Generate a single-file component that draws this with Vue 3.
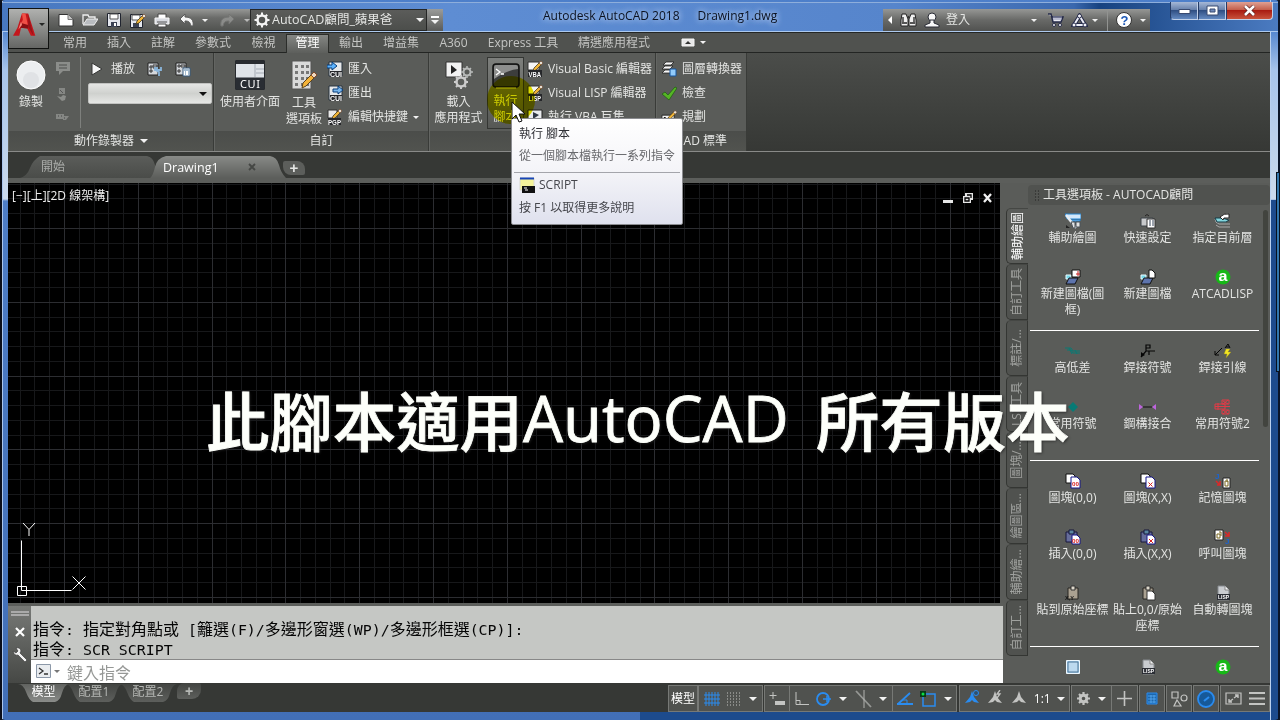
<template>
  <div class="window">
    <!-- title bar -->
    <header class="titlebar">
      <div class="qat">
        <Icon v-for="n in ['new', 'open', 'save', 'saveas', 'print']" :key="n" :name="n" class="qat-btn" />
        <Icon name="undo" class="qat-undo" />
        <i class="caret small"></i>
        <Icon name="redo" class="qat-redo" />
        <i class="caret small dim"></i>
        <div class="workspace">
          <Icon name="gear" />
          <span>AutoCAD顧問_蘋果爸</span>
          <i class="caret"></i>
        </div>
        <div class="qat-more"><b></b><i class="caret"></i></div>
      </div>
      <div class="caption"><span>Autodesk AutoCAD 2018</span><span>Drawing1.dwg</span></div>
      <div class="infobar">
        <i class="caret-left"></i>
        <Icon name="binoculars" />
        <Icon name="user" />
        <span class="login">登入</span>
        <i class="caret small"></i>
        <Icon name="cart" class="cart" />
        <Icon name="triangle" class="tri" />
        <i class="caret small"></i>
        <div class="help"><Icon name="help" /></div>
        <i class="caret small"></i>
      </div>
      <div class="controls">
        <div class="ctl"><Icon name="min" /></div>
        <div class="ctl"><Icon name="max" /></div>
        <div class="ctl close"><Icon name="close" /></div>
      </div>
    </header>

    <div class="body">
      <nav class="ribbon-tabs">
        <div v-for="t in ribbonTabs" :key="t.label" class="rtab" :class="{ active: t.active }" :style="{ width: t.w + 'px' }">{{ t.label }}</div>
        <Icon name="ribbonToggle" class="toggle" />
        <i class="caret small"></i>
      </nav>

      <section class="ribbon">
        <div class="panel recorder">
          <div class="panel-body">
            <div class="big rec"><Icon name="record" /><span>錄製</span></div>
            <div class="mini-col"><Icon name="comment" /><Icon name="clickmsg" /><Icon name="pause" /></div>
            <div class="play-col">
              <div class="play-row"><Icon name="play" /><span>播放</span><Icon name="pref" /><Icon name="manage" /></div>
              <div class="combo"><i class="caret"></i></div>
            </div>
          </div>
          <div class="panel-title">動作錄製器 <i class="caret"></i></div>
        </div>
        <div class="panel custom">
          <div class="panel-body">
            <div class="big cui"><Icon name="cui" /><span>使用者介面</span></div>
            <div class="big palette-btn"><Icon name="palette" /><span>工具<br />選項板</span></div>
            <div class="rows">
              <div class="row"><Icon name="import" /><span>匯入</span></div>
              <div class="row"><Icon name="export" /><span>匯出</span></div>
              <div class="row"><Icon name="pgp" /><span>編輯快捷鍵</span><i class="caret small"></i></div>
            </div>
          </div>
          <div class="panel-title">自訂</div>
        </div>
        <div class="panel apps">
          <div class="panel-body">
            <div class="big load"><Icon name="load" /><span>載入<br />應用程式</span></div>
            <div class="big run"><Icon name="script" /><span>執行<br />腳本</span></div>
            <div class="rows">
              <div class="row"><Icon name="vba" /><span class="vb">Visual Basic 編輯器</span></div>
              <div class="row"><Icon name="lisp" /><span class="vb">Visual LISP 編輯器</span></div>
              <div class="row"><Icon name="runvba" /><span>執行 VBA 巨集</span></div>
            </div>
          </div>
          <div class="panel-title">應用程式 <i class="caret"></i></div>
        </div>
        <div class="panel standards">
          <div class="panel-body">
            <div class="rows">
              <div class="row"><Icon name="layers" /><span>圖層轉換器</span></div>
              <div class="row"><Icon name="check" /><span>檢查</span></div>
              <div class="row"><Icon name="configure" /><span>規劃</span></div>
            </div>
          </div>
          <div class="panel-title">CAD 標準</div>
        </div>
      </section>

      <nav class="doc-tabs">
        <div class="dtab start">開始</div>
        <div class="dtab current"><span>Drawing1</span><Icon name="tabClose" /></div>
        <div class="dtab add">+</div>
      </nav>

      <main class="work">
        <div class="left">
          <div class="canvas">
            <svg class="grid" width="992" height="421">
              <path v-for="(l, i) in gridLines" :key="i" :d="l.d" :stroke="l.major ? '#2c2d31' : '#17181a'" />
            </svg>
            <div class="canvas-head">
              <span>[−][上][2D 線架構]</span>
              <Icon name="vpControls" />
            </div>
            <Icon name="ucs" class="ucs" />
          </div>
          <div class="command">
            <div class="cmd-handle"><Icon name="grip" /><Icon name="cmdClose" /><Icon name="wrench" /></div>
            <div class="cmd-main">
              <div class="history">
                <p v-for="line in history" :key="line"><span v-for="(s, i) in split(line)" :key="i" :class="{ latin: !s.cjk }">{{ s.text }}</span></p>
              </div>
              <div class="prompt"><Icon name="prompt" /><i class="caret small"></i><span>鍵入指令</span></div>
            </div>
          </div>
        </div>

        <aside class="palette">
          <div class="pal-tabs">
            <div v-for="(t, i) in paletteTabs" :key="i" class="ptab" :class="{ active: i === 0 }"><span>{{ t }}</span></div>
          </div>
          <div class="pal-main">
            <div class="pal-title"><Icon name="dots" /><span>工具選項板 - AUTOCAD顧問</span></div>
            <div class="pal-content">
              <div class="pal-groups">
                <div v-for="(g, i) in groups" :key="i" class="group">
                  <div v-for="t in g" :key="t[1]" class="tool"><Icon :name="t[0]" /><span>{{ t[1] }}</span></div>
                </div>
              </div>
              <div class="scroll"></div>
            </div>
          </div>
        </aside>
      </main>

      <footer class="footer">
        <div class="layouts">
          <div class="ltab active">模型</div>
          <div class="ltab">配置1</div>
          <div class="ltab">配置2</div>
          <div class="ltab plus">+</div>
        </div>
        <div class="status">
          <div v-for="(s, i) in statusGroups" :key="i" class="sgroup" :style="{ width: s.w + 'px', marginRight: s.gap + 'px' }">
            <template v-for="(it, j) in s.items" :key="j">
              <i v-if="it === 'v'" class="caret"></i>
              <Icon v-else-if="it in icons" :name="it" />
              <span v-else>{{ it }}</span>
            </template>
          </div>
        </div>
      </footer>
    </div>

    <!-- floating things -->
    <div class="appmenu"><Icon name="logo" /><i class="caret dark"></i></div>
    <div class="halo"></div>
    <div class="tooltip">
      <p class="tip-title">執行 腳本</p>
      <p class="tip-desc">從一個腳本檔執行一系列指令</p>
      <hr />
      <p class="tip-cmd"><Icon name="scriptTip" />SCRIPT</p>
      <p class="tip-help">按 F1 以取得更多說明</p>
    </div>
    <Icon name="cursor" class="cursor" />
    <div class="subtitle"><span>此腳本適用</span><span class="sub-latin">AutoCAD</span><span>所有版本</span></div>
    <div class="edge"></div>
  </div>
</template>

<script setup>
import { h } from 'vue';

// shape helpers: path and label
const p = (d, fill = 'none', stroke = 'none', w = 1) => ['path', { d, fill, stroke, 'stroke-width': w }];
const t = (text, x, y, size, fill, len) => ['text', {
  x, y, fill, 'font-size': size, 'font-weight': 700, 'font-family': '"Liberation Sans", sans-serif',
  textLength: len, lengthAdjust: 'spacingAndGlyphs'
}, text];
const c = (cx, cy, r, fill = 'none', stroke = 'none', w = 1) => ['circle', { cx, cy, r, fill, stroke, 'stroke-width': w }];

const L = '#e8e9ea';
const B = '#2a8cf0';
const G = '#c3c4c2';
const D = '#26272a';

// repeated pieces
const sheet = p('M1 1h7l3 3v9H1z', '#fff', '#222');
const pencil = (x, y) => [
  p(`M${x} ${y + 9}l1-3 6-6 2 2-6 6z`, '#f0b437', '#443a20', 0.8),
  p(`M${x + 6} ${y + 1}l2-2 2 2-2 2z`, '#e8e2d8', '#6a3d20', 0.6)
];
const cuiBox = [p('M2 1h13v14H2z', '#e6e8ea', '#26323f'), p('M3 10h12v6H3z', D), t('CUI', 3, 16, 7, '#fff', 12)];
const lispIcon = [p('M3 1h7l4 4v10H3z', '#c9ccd0', '#85898e'), p('M10 1v4h4', '#f5f5f5', '#888'), p('M2 9h13v6H2z', '#2b2e35'), t('LISP', 3, 14, 5.5, '#fff', 11)];
const green = [c(8, 8, 7.5, '#16b816'), t('a', 3.6, 12.4, 14, '#fff', 9)];
const folder = [p('M1 6h5v4H1z', '#76d6e8', '#e8fbff'), p('M1 15l3-6h9l-3 6z', '#5d74ad', '#111')];
const twoSheets = [p('M1 1h7l2 2v7H1z', '#fff', '#111'), p('M6 4h6l3 3v8H6z', '#fff', '#15158a')];
const clip = [p('M1 3h11v10H1z', '#666d9b', '#16163c'), p('M4 1h5v4H4z', '#5a86a0', '#16163c'), p('M7 6h5l3 3v6H7z', '#fff', '#15158a')];
const clipTan = [p('M3 3h10v11H3z', '#aaa191', '#292722'), p('M6 1h4v4H6z', '#ded9cc', '#333')];
const blockJ = [p('M8 5h7v10H8z', '#fff', '#222'), p('M10 8h3v5h-3zM12 6v3', 'none', '#76651d')];
const redX = p('M8.5 9.5l4 4M12.5 9.5l-4 4', 'none', '#d92020');
const star = 'M8 1l2 6 5 6-5-1-2-2-2 2-5 1 5-6z';

const icons = {
  logo: [28, 28, p('M10 1h7l8 25h-5l-4-8-7-1-2 9H0L5 17z', '#c4161c'), p('M10 1h4l3 15-9-1 3-7z', '#ef5047'), p('M10 12l7 2v4l-9-1z', '#8a0e12'), p('M9 10l-3 9 4-5z', '#f48b80'), p('M17 2l6 24-6-10z', '#97151a')],
  new: [16, 14, p('M1 1.500h9l5 5V13H1z', '#fff', '#333'), p('M10 1.500v5h5', '#c8c8c8', '#777')],
  open: [16, 14, p('M1 11V2h5l1 2h6v2', 'none', '#eee', 1.300), p('M1 12l4-6h11l-4 6z', '#b9bcc0', '#eee')],
  save: [14, 14, p('M.5.500h13v13H.5z', '#e4e7ee', '#20242f'), p('M3 1h8v5H3z', '#fff', '#555'), p('M4 9h6v5H4z', '#3b4254'), p('M7 10h2v3H7z', '#fff')],
  saveas: [16, 15, p('M.5 1.500h12v13H.5z', '#e4e7ee', '#20242f'), p('M2 2h8v5H2z', '#fff', '#555'), p('M3 10h6v4H3z', '#3b4254'), ...pencil(6, 2)],
  print: [16, 15, p('M4 1h8v5H4z', '#fff', '#444'), p('M1 5h14v6H1z', '#d8dae0', '#f8f8f8'), p('M3 9h10', 'none', '#555'), p('M4 11h8v3H4z', '#fff', '#444')],
  undo: [15, 14, p('M6 1L1 6l5 5V8c4 0 5 1 6 5h2c1-6-2-9-8-9z', '#f5f5f5', '#5a5a5a')],
  redo: [15, 14, p('M9 1l5 5-5 5V8C5 8 4 9 3 13H1c-1-6 2-9 8-9z', '#8b8c8a', '#747573')],
  gear: [16, 16, c(8, 8, 4.500, 'none', '#f5f5f5', 2.500), p('M8 .5v3M8 12.500v3M.5 8h3M12.500 8h3M2.800 2.800l2 2M11.200 11.200l2 2M13.200 2.800l-2 2M2.800 13.200l2-2', 'none', '#f5f5f5', 2)],
  binoculars: [17, 16, p('M2 2h4l2 5v7H1V8zM15 2h-4L9 7v7h7V8z', '#f0f0f0', '#222'), p('M3 5v5M14 5v5M2 11h5M10 11h5M8 5h1', 'none', '#222', 1.300)],
  user: [16, 16, c(8, 5, 4, '#f8f8f8', '#2b2d36'), p('M6 8h4v3l5 2v2H1v-2l5-2z', '#f8f8f8', '#2b2d36')],
  cart: [17, 16, p('M1 2h3l2 8h8l2-5H5', '#e9eaf3', '#252a48', 1.500), p('M6 5h9M6 7h9', 'none', '#8b8fae'), c(7, 13, 1.500, '#fff', '#252a48'), c(13, 13, 1.500, '#fff', '#252a48')],
  triangle: [17, 15, p('M8.500 3L3 12h11z', 'none', '#252a48', 4), p('M8.500 3L3 12h11z', 'none', '#eceef7', 2), c(8.500, 3, 2, '#f3f4fa', '#252a48'), c(3, 12, 2, '#f3f4fa', '#252a48'), c(14, 12, 2, '#f3f4fa', '#252a48')],
  help: [16, 16, c(8, 8, 7.500, '#fff', '#333'), t('?', 4.500, 13, 13, '#1b57b5')],
  min: [13, 8, p('M1 2.500h11v4H1z', '#fff', '#394a70')],
  max: [13, 11, p('M1 1h11v9H1z', '#fff', '#394a70'), p('M4 4h5v3H4z', '#6f89ba', '#394a70')],
  close: [13, 11, p('M2 1l9 9M11 1L2 10', 'none', '#5c2020', 4), p('M2 1l9 9M11 1L2 10', 'none', '#fff', 2.600)],
  ribbonToggle: [14, 9, p('M1 1h12v7H1z', '#e8e8e8', '#f5f5f5'), p('M4 6l3-3 3 3z', '#333')],
  record: [30, 30, c(15, 15, 14, '#eceef0', '#fff'), c(15, 20, 8, '#e0e2e5')],
  comment: [14, 14, p('M0 0h14v9H7l-4 4V9H0z', '#8b8d8a'), p('M3 3h8M3 6h8', 'none', '#4d4f4c')],
  clickmsg: [14, 14, p('M3 0h6v6H3z', '#858784'), p('M1 8l4 1 2-2 3 1-1 4-3 1z', '#8b8d8a'), p('M4 2l3 3', 'none', '#555')],
  pause: [14, 8, p('M0 0h8v2h5L10 6H7V5H0z', '#858784'), p('M2 2h1M5 2h1M8 4h1', 'none', '#444')],
  play: [12, 14, p('M1 1l10 6-10 6z', '#f7f7f7', '#343534')],
  pref: [15, 15, p('M1 1h10v12H1z', '#d5d8dc', '#222'), p('M3 4h2v2H3zM3 8h2v2H3zM6 3h4v2H6zM6 6h4', 'none', '#333'), p('M10 5v4l2 1v4M8 5v3h6V5', 'none', '#8ab6dc', 1.800)],
  manage: [16, 15, p('M1 1h10v12H1z', '#d5d8dc', '#222'), p('M3 3h2v2H3zM3 8h2v2H3zM6 3h4v2H6z', 'none', '#333'), p('M8 6h7v8H8z', '#fff', '#345b80'), p('M9 8h5M10 10h1M13 10h1M10 12h1M13 12h1', 'none', '#46769f')],
  cui: [30, 30, p('M.5.500h29v29H.5z', '#dfe3e8', '#272a2e'), p('M1 1h28v3H1z', '#282b30'), p('M20 4v13M21 9h8M21 13h8', 'none', '#a5abb5'), p('M1 17.500h28V29H1z', '#292d33'), ['text', { x: 5, y: 28, fill: '#fff', 'font-size': 11, 'font-family': '"Noto Sans", sans-serif', textLength: 20 }, 'CUI']],
  palette: [26, 31, p('M1 1h19v28H1z', '#dadada', '#555'), ...[5, 11, 17, 23].flatMap(y => [4, 10, 15].map(x => p(`M${x} ${y}h3v3h-3z`, '#777'))), p('M11 28l1-5 9-9 3 3-9 9z', '#f4b33a', '#5b431d'), p('M20 15l3-3 3 3-3 3z', '#edd9c2', '#864c28')],
  import: [16, 16, ...cuiBox, p('M0 4h5V1l5 4-5 4V7H0z', '#5bb3ff', '#083d78')],
  export: [16, 16, ...cuiBox, p('M6 4h5V1l5 4-5 4V7H6z', '#76b5ed', '#083d78')],
  pgp: [16, 16, p('M1 1h9v8H1z', '#e9e9e9', '#333'), ...pencil(5, 1), p('M1 9h13v7H1z', D), t('PGP', 1, 15.5, 7, '#fff', 13)],
  load: [28, 29, p('M1 1h16v15H1z', '#f2f2f2', '#333'), p('M6 4v9l6-4z', '#222'), c(22, 11, 3.5, 'none', '#b7b9b8', 2), p('M22 5v3M22 14v3M16 11h3M25 11h3M18 7l2 2M26 7l-2 2M18 15l2-2M26 15l-2-2', 'none', '#b7b9b8', 1.5), c(16, 21, 4.5, 'none', '#ccc', 2.5), p('M16 14v3M16 25v3M9 21h3M20 21h3M11 16l2 2M21 16l-2 2M11 26l2-2M21 26l-2-2', 'none', '#ccc', 2)],
  script: [28, 26, ['rect', { x: 1, y: 1, width: 26, height: 23, rx: 3, fill: '#3c3d3c', stroke: '#111', 'stroke-width': 1.5 }], p('M2 10V4q0-2 2-2h20q2 0 2 2v2Q15 7 2 16z', '#8d8e8d'), p('M4 6l4 3-4 3M9 11h3', 'none', '#fff', 1.3), p('M4 25h20', 'none', '#ccc')],
  vba: [16, 17, p('M1 1h11v8H1z', '#f5f5f5', '#333'), ...pencil(6, 1), p('M1 9h14v7H1z', D), t('VBA', 1.5, 15.7, 7, '#fff', 12.5)],
  lisp: [16, 17, p('M1 1h11v8H1z', '#f5f5f5', '#333'), ...pencil(6, 1), p('M1 9h14v7H1z', D), t('LISP', 1.500, 15.700, 7, '#fff', 12.500)],
  runvba: [16, 16, p('M1 1h14v14H1z', '#e9ebed', '#222'), p('M6 3v7l6-4z', '#303845')],
  layers: [16, 16, p('M5 1h8l-3 3H2zM4 5h8l-3 3H1zM4 9h8l-3 3H1z', '#f8f8f8', '#222', 0.8), p('M9 8h6v7H9z', '#91cafa', '#17559c')],
  check: [16, 15, p('M1 8l3-2 3 3 7-8 2 1-8 12z', '#55b525', '#1c5a12', 0.7)],
  configure: [17, 15, p('M1 5h13v6H1z', '#f4f4f4', '#222'), p('M3 7h2v2H3z', '#111'), ...pencil(7, 1)],
  tabClose: [8, 8, p('M1 1l6 6M7 1L1 7', 'none', '#454744', 1.800)],
  vpControls: [50, 12, p('M0 8h10v3H0zM22 1h8v7h-2v3h-8V4h2z', '#e6e6e6'), p('M22 6h4v3h-4zM24 3h4v3', 'none', '#000', 1.3), p('M41 2l7 8M48 2l-7 8', 'none', '#f0f0f0', 2.3)],
  ucs: [78, 76, p('M9.500 18.500v50h50M5.500 64.500h9v9h-9zM60.500 54.500l13 13M73.500 54.500l-13 13M11 1l6 6.500L23 1M17 7.500V14', 'none', '#fff')],
  grip: [18, 6, p('M0 1h18M0 4h18', 'none', '#aaa', 2)],
  cmdClose: [10, 10, p('M1 1l8 8M9 1L1 9', 'none', '#fff', 2.200)],
  wrench: [16, 16, p('M1 4l3 2 2-2-2-3q4-1 5 3l-1 2 7 7-2 2-7-7q-4 1-5-4z', '#f3f3f3', '#333', 0.6)],
  prompt: [16, 15, p('M.5.5h14v13H.5z', '#e9ecef', '#8c98a8'), p('M3 4l4 3-4 3M8 10h4', 'none', '#333', 1.3)],
  dots: [4, 11, p('M.5 0v11M3.500 0v11', 'none', '#393a38'), p('M0 2.500h4M0 5.500h4M0 8.500h4', 'none', '#555754')],
  scriptTip: [17, 16, p('M1 1h14v12H1z', '#f5f49b', '#d8d8d0'), p('M1 1.500h14', 'none', '#1744b8', 2), p('M3 9h13v7H3z', '#111'), p('M5 11h3M6 13h3', 'none', '#fff')],
  cursor: [15, 22, p('M1 1v17l4-4 3 7 3-1-3-7h6z', '#fff', '#111')],
  // palette tools
  draw: [16, 16, p('M0 1h16v5H2zM5 7h10v1H5z', '#d2e8fb', '#2484d0'), p('M1 2l10 13', 'none', '#e8edf2', 2.500), p('M6 9h4v6H8zM11 9h4v5h-4z', '#e4e4e4', '#4a525b'), p('M1 12v3h4z', '#222')],
  quick: [16, 16, p('M1 5h12v8H1z', '#c7c9cb', '#3c4249'), p('M5 3q2-3 4 0', 'none', '#222'), p('M7 6h8v9H7z', '#fff', '#333'), p('M9 8h2M12 8h2M9 10h2M12 10h2M9 12h2M12 12h2', 'none', '#38465a')],
  curlayer: [17, 16, p('M1 6h14l-3 3H2zM2 9l3 2h11M2 12l3 2h11', 'none', '#aaa'), p('M1 5h7l7 2-3 2H3z', '#82d6de', '#143b45'), p('M6 4q4-4 9-3v4h-5l-1 2z', '#fff', '#222')],
  newframe: [16, 16, ...folder, p('M7 1h8v7H7z', '#fff', '#111'), p('M13 2v5M11 5h4', 'none', '#c42020')],
  newdwg: [16, 16, ...folder, p('M9 1h3l3 3v5H9z', '#fff', '#111')],
  green: [16, 16, ...green],
  level: [16, 16, p('M0 5h6l2 3h7M2 7h4l2 3h7M4 5l3 6M10 7l2 4', 'none', '#087a75', 1)],
  weld: [16, 16, p('M1 14l5-6h9M6 8V2h4v3H6M9 8v4', 'none', '#050505', 1.200), p('M1 14v-5l4 3z', '#050505')],
  weldlead: [17, 16, p('M1 12l7-7M1 12V8M1 12h4M11 5l3-4 2 4M12 4h3', 'none', '#050505'), p('M12 6l-2 5h3l-1 4 5-6h-3l2-3z', '#f3e624', '#92891a', 0.4)],
  diamond: [16, 16, p('M8 3l5 5-5 5-5-5z', '#087a75')],
  steel: [17, 16, p('M4 8h9', 'none', '#111'), p('M0 5l4 3-4 3zM17 5l-4 3 4 3z', '#bd64dd')],
  symbol2: [17, 16, p('M1 5h10v5H1zM1 7.500h15M8 1h7v4H8zM8 11h7v4H8zM9 2l5 3M14 1L9 5M9 11l5 4M14 11l-5 4M4 4v7', 'none', '#e33a47')],
  block0: [16, 16, ...twoSheets, t('00', 7, 13, 6, '#d92020', 7)],
  blockx: [16, 16, ...twoSheets, redX],
  memory: [16, 16, t('J', 0, 6, 8, '#1864d6'), p('M1 8l4 4m0-4v4H2', 'none', '#da2929', 1.5), ...blockJ],
  insert0: [16, 16, ...clip, t('00', 7, 14, 6, '#d92020', 7)],
  insertx: [16, 16, ...clip, p('M9 10l4 4M13 10l-4 4', 'none', '#d92020')],
  call: [17, 16, p('M1 1h8v10H1z', '#fff', '#222'), p('M3 5h3v4H3zM5 3h2v4', 'none', '#76651d'), p('M11 3l4 4m0-4v4h-4', 'none', '#da2929', 1.500), t('J', 11, 15, 8, '#1864d6')],
  pastexy: [16, 16, ...clipTan, t('X,Y', 0, 15, 6, '#111', 9)],
  paste0: [16, 16, ...clipTan, p('M7 6h5l3 3v6H7z', '#fff', '#333')],
  lispfile: [16, 16, ...lispIcon],
  square: [16, 16, p('M1.500 1.500h13v13h-13z', '#a8cce7', '#eef8ff'), p('M3 3h10v10H3z', '#bcd9ef', '#4d7798')],
  // status bar
  grid: [16, 16, p('M2 1v14M5 1v14M8 1v14M11 1v14M14 1v14M0 4h16M0 8h16M0 12h16', 'none', B)],
  snap: [14, 14, ['path', { d: 'M0 1h14M0 4h14M0 7h14M0 10h14M0 13h14', stroke: G, 'stroke-dasharray': '1 2', fill: 'none' }]],
  dyn: [16, 16, p('M4 1v7M.5 4.500h7', 'none', G), p('M6 10h10v4H6z', G)],
  ortho: [14, 14, p('M1 0v12.500h13M1 8.500h4v4', 'none', G)],
  polar: [16, 16, c(7, 8, 6, 'none', B, 1.800), p('M7 8h8M11 5v6', 'none', B, 1.500)],
  iso: [17, 18, p('M1 1l15 16', 'none', '#969895', 1.800), p('M9 0v18', 'none', '#b2b3b1')],
  otrack: [17, 15, p('M0 13h16M1 13L13 2', 'none', B, 1.800), p('M5 9h5v4', 'none', B)],
  osnap: [17, 16, p('M3 3h12v12H3z', 'none', B, 1.500), p('M0 0h6v6H0z', '#063b16'), c(3, 3, 1.500, '#0fe044')],
  annoA: [17, 17, p(star, B), c(12, 3, 2.500, '#31506c', B)],
  annoB: [17, 17, p(star, G), p('M13 0l-3 4h3l-3 4', 'none', G, 1.3)],
  annoC: [17, 17, p(star, G)],
  cog: [13, 13, c(6.500, 6.500, 3.300, 'none', G, 3), p('M6.500 0v3M6.500 10v3M0 6.500h3M10 6.500h3M2 2l2 2M9 9l2 2M11 2L9 4M2 11l2-2', 'none', G, 2.200)],
  plus: [15, 15, p('M7.500 0v15M0 7.500h15', 'none', G, 1.600)],
  calc: [12, 13, p('M1 1h10v11H1z', '#1d67ab', B), p('M2 4h8M2 7h8M2 10h8M5 3v8M8 3v8', 'none', '#62b5ff', 0.7)],
  shapes: [17, 16, p('M1 1h6v6H1zM6 9l4 6H3z', 'none', G, 1.200), c(13, 7, 3, 'none', G, 1.200)],
  perf: [18, 18, c(9, 9, 8, '#165999', B, 1.800), p('M7 11l5-4', 'none', B, 2)],
  full: [17, 13, p('M1 1h15v11H1z', 'none', G, 1.200), p('M9 6l4-3m-3 0h3v3M8 7l-4 3m0-3v3h3', 'none', G, 1.400)],
  menu: [16, 13, p('M0 1h16M0 6.500h16M0 12h16', 'none', G, 2)]
};

const Icon = (props) => {
  const [w, hgt, ...shapes] = icons[props.name];
  return h('svg', { width: w, height: hgt, viewBox: `0 0 ${w} ${hgt}`, class: 'icon' }, shapes.map(s => h(...s)));
};
Icon.props = ['name'];

const ribbonTabs = [
  { label: '常用', w: 44 },
  { label: '插入', w: 44 },
  { label: '註解', w: 44 },
  { label: '參數式', w: 56 },
  { label: '檢視', w: 45 },
  { label: '管理', w: 43, active: true },
  { label: '輸出', w: 44 },
  { label: '增益集', w: 56 },
  { label: 'A360', w: 49 },
  { label: 'Express 工具', w: 90 },
  { label: '精選應用程式', w: 92 }
];

const paletteTabs = ['輔助繪圖', '自訂工具', '標註/...', 'LSP工具', '圖塊/...', '繪圖區...', '輔助繪...', '自訂工...'];

const groups = [
  [
    ['draw', '輔助繪圖'], ['quick', '快速設定'], ['curlayer', '指定目前層'],
    ['newframe', '新建圖檔(圖框)'], ['newdwg', '新建圖檔'], ['green', 'ATCADLISP']
  ],
  [
    ['level', '高低差'], ['weld', '銲接符號'], ['weldlead', '銲接引線'],
    ['diamond', '常用符號'], ['steel', '鋼構接合'], ['symbol2', '常用符號2']
  ],
  [
    ['block0', '圖塊(0,0)'], ['blockx', '圖塊(X,X)'], ['memory', '記憶圖塊'],
    ['insert0', '插入(0,0)'], ['insertx', '插入(X,X)'], ['call', '呼叫圖塊'],
    ['pastexy', '貼到原始座標'], ['paste0', '貼上0,0/原始座標'], ['lispfile', '自動轉圖塊']
  ],
  [['square', ''], ['lispfile', ' '], ['green', '  ']]
];

const statusGroups = [
  { w: 30, gap: 0, items: ['模型'] },
  { w: 65, gap: 1, items: ['grid', 'snap', 'v'] },
  { w: 26, gap: -1, items: ['dyn'] },
  { w: 104, gap: -1, items: ['ortho', 'polar', 'v', 'iso', 'v'] },
  { w: 65, gap: 2, items: ['otrack', 'osnap', 'v'] },
  { w: 111, gap: 1, items: ['annoA', 'annoB', 'annoC', '1:1', 'v'] },
  { w: 41, gap: -1, items: ['cog', 'v'] },
  { w: 27, gap: 1, items: ['plus'] },
  { w: 26, gap: 1, items: ['calc'] },
  { w: 26, gap: 1, items: ['shapes'] },
  { w: 26, gap: 1, items: ['perf'] },
  { w: 50, gap: 0, items: ['full', 'menu'] }
];

const history = [
  '指令: 指定對角點或 [籬選(F)/多邊形窗選(WP)/多邊形框選(CP)]:',
  '指令: SCR SCRIPT'
];

// ideographs are set wider than the latin glyphs
const split = (line) => (line.match(/[\u4e00-\u9fff]+|[^\u4e00-\u9fff]+/g) || [])
  .map(text => ({ text, cjk: text.charCodeAt(0) > 0x4dff }));

// drawing grid, every fifth line is a major one
const gridLines = [];
const step = 73.8 / 5;
for (let i = -3; i < 65; i++) {
  const x = Math.round(56 + i * step) + 0.5;
  gridLines.push({ d: `M${x} 0V421`, major: i % 5 === 0 });
}
for (let i = -3; i < 26; i++) {
  const y = Math.round(45 + i * step) + 0.5;
  gridLines.push({ d: `M0 ${y}H992`, major: i % 5 === 0 });
}
gridLines.sort((a, b) => a.major - b.major);
</script>

<style>
body {
  background: #10151f;
  overflow: hidden;
}
</style>

<style scoped>
.window {
  position: relative;
  box-sizing: border-box;
  width: 1280px;
  height: 720px;
  padding: 2px 9px 9px 8px;
  overflow: hidden;
  border-radius: 5px;
  background: linear-gradient(90deg, #0a0d18 2px, #aac5ec 2px, #aac5ec 3px, transparent 3px, transparent 1278px, #0a1428 1278px),
    linear-gradient(90deg, transparent 8px, transparent 1270px, #b9d0ef 1270px, #b9d0ef 1271px, transparent 1271px),
    linear-gradient(90deg, transparent 640px, #1d4b8d 640px) 0 200px / 100% 520px no-repeat,
    linear-gradient(#4d7fca 0, #5788d0 32px, #a7c4eb 70px, #cbdaed 199px, #4e7dc6 201px, #426fb7 100%);
  color: #e4e5e3;
  font: 12px/16px "Open Sans", "Noto Sans CJK TC", sans-serif;
}

.icon {
  display: block;
  flex: none;
}

p {
  margin: 0;
}

.caret {
  flex: none;
  border: 4px solid transparent;
  border-top: 4px solid #f2f2f2;
  border-bottom: 0;
}

.caret.small {
  border-width: 3px 3px 0;
}

.caret.dim {
  opacity: 0.6;
}

.titlebar {
  display: flex;
  align-items: flex-start;
  height: 30px;
  margin: 0 -7px 0 -6px;
  padding-left: 47px;
  background: linear-gradient(90deg, #4878c0, #5e8dd3 35%, #5685cc 70%, #3a68ae 84%, #174381 86%, #4b7bc1 100%);
  border-top: 1px solid #8eaedb;
  box-sizing: border-box;
  border-bottom: 1px solid #acc9ee;
}

.qat {
  display: flex;
  align-items: center;
  box-sizing: border-box;
  width: 394px;
  height: 22px;
  margin-top: 6px;
  padding-left: 9px;
  background: linear-gradient(#979896, #6a6b69 40%, #50524f);
}

.qat-btn {
  width: 16px;
  margin-right: 8px;
}

.qat-undo {
  margin: 0 8px 0 1px;
}

.qat-redo {
  margin: 0 9px 0 12px;
}

.workspace {
  display: flex;
  align-items: center;
  box-sizing: border-box;
  width: 181px;
  height: 22px;
  margin-left: auto;
  padding: 0 2px 0 3px;
  border: 1px solid #252625;
  background: linear-gradient(#5b5c5a, #4c4e4b);
  font-size: 12.5px;
}

.workspace span {
  margin-left: 2px;
  white-space: nowrap;
}

.workspace .caret {
  margin-left: auto;
}

.qat-more {
  display: flex;
  flex-direction: column;
  align-items: center;
  justify-content: center;
  gap: 2px;
  width: 16px;
  height: 22px;
  background: linear-gradient(#9b9c9a, #595a58);
}

.qat-more b {
  width: 8px;
  height: 2px;
  background: #fff;
}

.caption {
  display: flex;
  gap: 18px;
  margin: 5px 0 0 100px;
  width: 340px;
  color: #0b1220;
  font-size: 12px;
  text-shadow: 0 0 6px #b9cff0, 0 0 6px #b9cff0;
  white-space: nowrap;
}

.infobar {
  display: flex;
  align-items: center;
  box-sizing: border-box;
  width: 267px;
  height: 22px;
  margin-top: 6px;
  padding-left: 5px;
  background: linear-gradient(#969795, #686967 50%, #515250);
}

.caret-left {
  margin-right: 8px;
  border: 4px solid transparent;
  border-right-color: #fff;
  border-left: 0;
}

.infobar .icon + .icon {
  margin-left: 7px;
}

.login {
  width: 85px;
  margin-left: 6px;
}

.infobar .cart {
  margin-left: 10px;
}

.infobar .tri {
  margin-left: 7px;
  margin-right: 4px;
}

.help {
  display: flex;
  align-items: center;
  height: 22px;
  margin: 0 8px 0 9px;
  padding-left: 8px;
  border-left: 1px solid #929391;
}

.controls {
  display: flex;
  margin: -1px 0 0 20px;
}

.ctl {
  display: flex;
  align-items: center;
  justify-content: center;
  box-sizing: border-box;
  width: 28px;
  height: 18px;
  border: 1px solid #c1d0e8;
  border-top: 0;
  border-left-color: #243b66;
  background: linear-gradient(#a6b8d6, #6781ac 45%, #304f83 50%, #6389c0);
}

.ctl:first-child {
  border-radius: 0 0 0 4px;
}

.ctl.close {
  width: 47px;
  border-radius: 0 0 4px 0;
  background: linear-gradient(#dfa193, #c3604d 45%, #a91c12 50%, #c8533c);
}

.body {
  display: flex;
  flex-direction: column;
  height: 680px;
  background: #363835;
  width: 1262px;
}

.ribbon-tabs {
  display: flex;
  align-items: center;
  box-sizing: border-box;
  height: 21px;
  padding-left: 45px;
  border-top: 1px solid #242624;
  border-bottom: 1px solid #232523;
  background: #50524f;
  color: #c4c5c3;
}

.rtab {
  height: 20px;
  line-height: 20px;
  text-align: center;
  white-space: nowrap;
}

.rtab.active {
  position: relative;
  top: 1px;
  box-sizing: border-box;
  height: 19px;
  line-height: 16px;
  border: 1px solid #2b2d2a;
  border-bottom: 0;
  background: linear-gradient(#858784, #5d5f5c);
  color: #fff;
}

.toggle {
  margin: 0 5px 0 21px;
}

.ribbon {
  display: flex;
  box-sizing: border-box;
  height: 99px;
  border-bottom: 1px solid #898a88;
  background: linear-gradient(#4b4d4a, #363835);
}

.panel {
  display: flex;
  flex-direction: column;
  box-sizing: border-box;
  border-right: 1px solid #393b38;
  border-left: 1px solid #636562;
  background: #5a5c59;
}

.recorder {
  width: 206px;
}

.custom {
  width: 215px;
}

.apps {
  width: 227px;
}

.standards {
  width: 91px;
}

.panel-body {
  display: flex;
  height: 78px;
  box-sizing: border-box;
  padding-top: 4px;
}

.panel-title {
  display: flex;
  align-items: center;
  justify-content: center;
  gap: 6px;
  height: 20px;
  background: linear-gradient(#4b4d4a, #51534f);
}

.big {
  display: flex;
  flex-direction: column;
  align-items: center;
  text-align: center;
  white-space: nowrap;
}

.big span {
  margin-top: 4px;
}

.rec {
  width: 44px;
  padding-top: 3px;
}

.mini-col {
  display: flex;
  flex-direction: column;
  align-items: center;
  gap: 12px;
  box-sizing: border-box;
  width: 28px;
  height: 71px;
  padding: 5px 7px 0 0;
  border-right: 1px solid #7e807d;
}

.mini-col {
  margin-right: 7px;
}

.play-row {
  display: flex;
  align-items: center;
  height: 24px;
  padding-left: 3px;
}

.play-row span {
  margin: 0 12px 0 8px;
}

.play-row .icon:last-child {
  margin-left: 13px;
}

.combo {
  display: flex;
  align-items: center;
  justify-content: flex-end;
  box-sizing: border-box;
  width: 124px;
  height: 21px;
  margin-top: 2px;
  padding-right: 4px;
  border: 1px solid #c2c3c1;
  border-radius: 2px;
  background: linear-gradient(#e5e6e4, #cfd1ce 50%, #e6e7e5);
}

.combo .caret {
  border-top-color: #111;
}

.cui {
  width: 70px;
  padding-top: 3px;
}

.palette-btn {
  width: 38px;
  padding-top: 3px;
}

.rows {
  display: flex;
  flex-direction: column;
  margin-left: 4px;
}

.row {
  display: flex;
  align-items: center;
  height: 24px;
  white-space: nowrap;
}

.row span {
  margin-left: 5px;
}

.row .caret {
  margin-left: 5px;
}

.custom .big span:last-child {
  margin-top: 4px;
}

.load {
  width: 57px;
  padding-top: 4px;
}

.run {
  box-sizing: border-box;
  width: 37px;
  height: 72px;
  padding-top: 5px;
  border: 1px solid #343633;
  background: linear-gradient(#7d7f7c, #666865 60%, #565855);
}

.apps .rows {
  margin-left: 3px;
}

.standards .rows {
  margin-left: 4px;
}

.standards .row .icon {
  width: 16px;
}

.doc-tabs {
  display: flex;
  box-sizing: border-box;
  height: 31px;
  padding: 4px 0 0 12px;
  border-bottom: 5px solid #5c5e5b;
}

.dtab {
  box-sizing: border-box;
  height: 22px;
  line-height: 21px;
}

.start {
  width: 140px;
  padding-left: 21px;
  background: linear-gradient(#5b5d5a, #4a4c49);
  color: #a9aba8;
  clip-path: path('M0 22Q7 20 10 12T20 0H127Q133 1 135 9T140 22z');
}

.current {
  display: flex;
  align-items: center;
  justify-content: space-between;
  width: 136px;
  margin-left: -10px;
  padding: 0 30px 0 13px;
  background: linear-gradient(#888a87, #5c5e5b);
  color: #fff;
  font-size: 12.500px;
  clip-path: path('M0 22Q3 20 5 11T16 0H120Q127 1 129 9T136 22z');
}

.add {
  width: 22px;
  height: 14px;
  margin: 5px 0 0 -3px;
  border-radius: 2px 8px 2px 8px;
  background: #5c5e5b;
  font: bold 15px/13px "Liberation Sans", sans-serif;
  text-align: center;
}

.work {
  display: flex;
  height: 500px;
  background: #5a5c59;
}

.left {
  width: 995px;
}

.canvas {
  position: relative;
  width: 992px;
  height: 420px;
  background: #000;
  overflow: hidden;
}

.grid {
  position: absolute;
  left: 0;
  top: 0;
  fill: none;
}

.canvas-head {
  position: relative;
  display: flex;
  justify-content: space-between;
  padding: 5px 7px 0 4px;
  color: #eee;
}

.canvas-head .icon {
  margin: 4px 0 0;
}

.ucs {
  position: absolute;
  left: 4px;
  top: 339px;
}

.command {
  display: flex;
  box-sizing: border-box;
  height: 80px;
  padding-top: 3px;
  background: #5c5e5b;
}

.cmd-handle {
  display: flex;
  flex-direction: column;
  align-items: center;
  gap: 10px;
  width: 23px;
  padding-top: 5px;
  background: linear-gradient(#777976, #464845);
}

.cmd-main {
  flex: 1;
}

.history {
  box-sizing: border-box;
  height: 54px;
  padding: 12px 2px 0;
  border-bottom: 1px solid #888;
  background: #c5c7c4;
  color: #050505;
  font: 16px/20px "Noto Sans CJK TC", sans-serif;
  white-space: pre;
}

.history p {
  height: 20px;
}

.latin {
  font: 14.900px/20px "DejaVu Sans Mono", monospace;
}

.prompt {
  display: flex;
  align-items: center;
  height: 23px;
  padding-left: 5px;
  background: #fff;
  color: #969896;
  font: 16px/22px "Noto Sans CJK TC", sans-serif;
}

.prompt .caret {
  margin: 0 7px 0 2px;
  border-top-color: #777;
}

.palette {
  display: flex;
  width: 267px;
  height: 498px;
  margin-top: 2px;
}

.pal-tabs {
  width: 22px;
  margin: 23px 0 0 3px;
}

.ptab {
  display: flex;
  align-items: center;
  justify-content: center;
  box-sizing: border-box;
  height: 56px;
  border: 1px solid #343633;
  border-top-color: #454744;
  border-radius: 5px 0 0 5px;
  background: #50524f;
  color: #a0a29f;
  font-size: 12px;
}

.ptab span {
  writing-mode: vertical-rl;
  text-orientation: sideways;
  transform: rotate(180deg);
  white-space: nowrap;
}

.ptab.active {
  border-right: 0;
  background: #5a5c59;
  color: #fff;
}

.pal-main {
  flex: 1;
  overflow: hidden;
}

.pal-title {
  display: flex;
  align-items: center;
  gap: 4px;
  height: 20px;
  padding-left: 7px;
  background: #50524f;
  border-radius: 4px;
  white-space: nowrap;
}

.pal-title .icon {
  margin-right: 0;
}

.pal-content {
  display: flex;
  height: 477px;
}

.pal-groups {
  width: 229px;
  margin-left: 2px;
  padding-top: 8px;
}

.group {
  display: grid;
  grid-template-columns: repeat(3, 75px);
  grid-auto-rows: 56px;
  margin-bottom: 12px;
  padding: 0 0 5px 5px;
  border-bottom: 1px solid #fff;
  height: max-content;
}

.group:last-child {
  border: 0;
}

.tool {
  display: flex;
  flex-direction: column;
  align-items: center;
  gap: 1px;
  text-align: center;
}

.tool span {
  width: 74px;
  word-break: break-all;
}

.scroll {
  width: 5px;
  height: 217px;
  margin: 5px 0 0 4px;
  border-radius: 3px;
  background: #42443f;
}

.footer {
  display: flex;
  height: 30px;
  background: #363835;
}

.layouts {
  display: flex;
  width: 663px;
  padding-left: 10px;
}

.ltab {
  width: 58px;
  height: 19px;
  margin-right: -4px;
  line-height: 18px;
  text-align: center;
  background: linear-gradient(#424441, #5d5f5c);
  color: #b6b8b5;
  clip-path: path('M0 1Q5 1 8 9T15 19H44Q49 18 51 10T58 1z');
}

.ltab.active {
  width: 51px;
  background: linear-gradient(#5e605d, #8a8c89);
  color: #fff;
  clip-path: path('M0 1Q5 1 8 9T15 19H37Q42 18 44 10T51 1z');
}

.ltab.plus {
  width: 24px;
  height: 16px;
  margin-left: 4px;
  border-radius: 8px 2px 9px 2px;
  font: bold 14px/17px "Liberation Sans", sans-serif;
  clip-path: none;
}

.status {
  display: flex;
  padding-top: 2px;
}

.sgroup {
  display: flex;
  flex: none;
  align-items: center;
  justify-content: space-around;
  box-sizing: border-box;
  height: 27px;
  padding: 0 1px;
  border: 1px solid #777976;
  background: #50524f;
  color: #fff;
  white-space: nowrap;
}

.appmenu {
  position: absolute;
  left: 8px;
  top: 8px;
  display: flex;
  align-items: center;
  justify-content: space-between;
  box-sizing: border-box;
  width: 41px;
  height: 41px;
  padding: 0 3px 8px 4px;
  border: 1px solid #101110;
  background: linear-gradient(#b0b1af, #656664);
}

.appmenu .icon {
  width: 25px;
}

.caret.dark {
  border-width: 3px 3px 0;
  border-top-color: #252625;
}

.halo {
  position: absolute;
  left: 487px;
  top: 76px;
  width: 48px;
  height: 48px;
  border-radius: 50%;
  background: #ffff00;
  mix-blend-mode: multiply;
}

.halo::after {
  content: '';
  position: absolute;
  inset: 0;
  border-radius: 50%;
  background: rgba(180, 176, 0, 0.35);
}

.tooltip {
  position: absolute;
  left: 511px;
  top: 118px;
  box-sizing: border-box;
  width: 172px;
  height: 107px;
  padding: 7px 2px 0;
  border: 1px solid #8b8c90;
  border-radius: 2px;
  background: linear-gradient(#fff, #f4f4f8 50%, #dfe1ee);
  color: #45464c;
  white-space: nowrap;
}

.tooltip p {
  padding-left: 5px;
}

.tooltip .tip-title {
  color: #2f3035;
}

.tip-desc {
  margin-top: 6px;
  color: #68696d;
}

.tooltip hr {
  margin: 8px 0 4px;
  border: 0;
  border-top: 1px solid #a4a5ab;
}

.tip-cmd {
  display: flex;
  align-items: center;
  gap: 3px;
}

.tip-help {
  margin-top: 7px;
}

.cursor {
  position: absolute;
  left: 511px;
  top: 101px;
}

.subtitle {
  position: absolute;
  left: 206px;
  top: 372px;
  display: flex;
  color: #fdfffa;
  font: 500 63.400px/92px "Noto Sans CJK TC", sans-serif;
  -webkit-text-stroke: 0.8px #fdfffa;
  text-shadow: 1px 1px 3px #222;
  white-space: nowrap;
}

.sub-latin {
  width: 293px;
  font-family: "Open Sans", sans-serif;
}

.edge {
  position: absolute;
  left: 1276px;
  top: 172px;
  width: 4px;
  height: 200px;
  box-sizing: border-box;
  border: 1px solid #07111f;
  background: #3276ad;
}
</style>
